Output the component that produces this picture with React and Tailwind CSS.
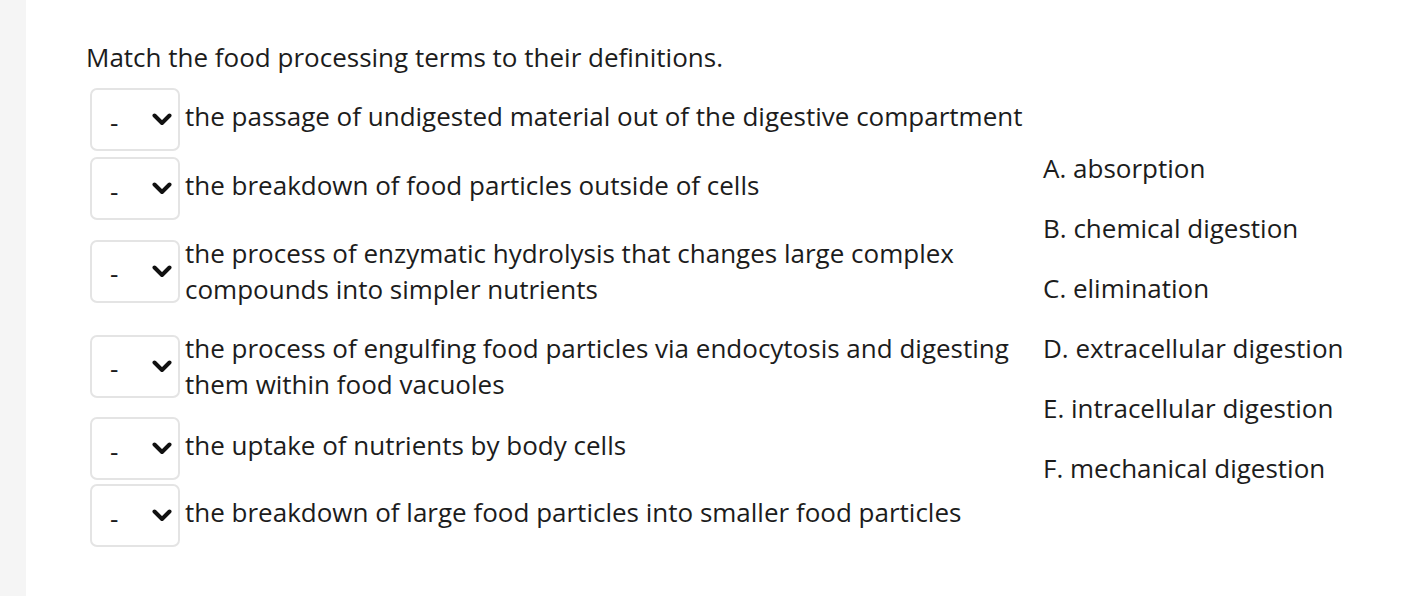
import React from "react";

const rows = [
  { text: "the passage of undigested material out of the digestive compartment", mt: "mt-0", single: true },
  { text: "the breakdown of food particles outside of cells", mt: "mt-[6px]", single: true },
  { text: "the process of enzymatic hydrolysis that changes large complex compounds into simpler nutrients", mt: "mt-[15px]" },
  { text: "the process of engulfing food particles via endocytosis and digesting them within food vacuoles", mt: "mt-[23px]" },
  { text: "the uptake of nutrients by body cells", mt: "mt-[15px]", single: true },
  { text: "the breakdown of large food particles into smaller food particles", mt: "mt-[4px]", single: true },
];

const answers = [
  "A. absorption",
  "B. chemical digestion",
  "C. elimination",
  "D. extracellular digestion",
  "E. intracellular digestion",
  "F. mechanical digestion",
];

function Chevron() {
  return (
    <svg width="20" height="13" viewBox="0 0 20 13" className="shrink-0">
      <polyline
        points="2.5,2.5 10,10 17.5,2.5"
        fill="none"
        stroke="#111"
        strokeWidth="4"
        strokeLinecap="round"
        strokeLinejoin="round"
      />
    </svg>
  );
}

function MatchSelect() {
  return (
    <div className="flex h-[63px] w-[90px] shrink-0 items-center justify-between rounded-[7px] border-2 border-[#e4e4e4] bg-white pl-[18px] pr-[6px]">
      <span className="pt-[4px]">-</span>
      <Chevron />
    </div>
  );
}

export default function App() {
  return (
    <div
      className="flex min-h-screen bg-white text-[26px] leading-[36px] text-[#1c1c1c]"
      style={{ fontFamily: '"Open Sans", "Noto Sans", sans-serif' }}
    >
      <div className="w-[26px] shrink-0 bg-[#f5f5f5]" />
      <div className="pl-[60px] pt-[39px]">
        <p>Match the food processing terms to their definitions.</p>
        <div className="mt-[13px] flex">
          <div className="pl-[4px]">
            {rows.map((r, i) => (
              <div key={i} className={`flex items-center gap-[5px] ${r.mt}`}>
                <MatchSelect />
                <div className={`w-[850px] ${r.single ? "mb-[7px]" : ""}`}>{r.text}</div>
              </div>
            ))}
          </div>
          <div className="ml-[8px] flex flex-col gap-[24px] pt-[62px] whitespace-nowrap">
            {answers.map((a) => (
              <div key={a}>{a}</div>
            ))}
          </div>
        </div>
      </div>
    </div>
  );
}
